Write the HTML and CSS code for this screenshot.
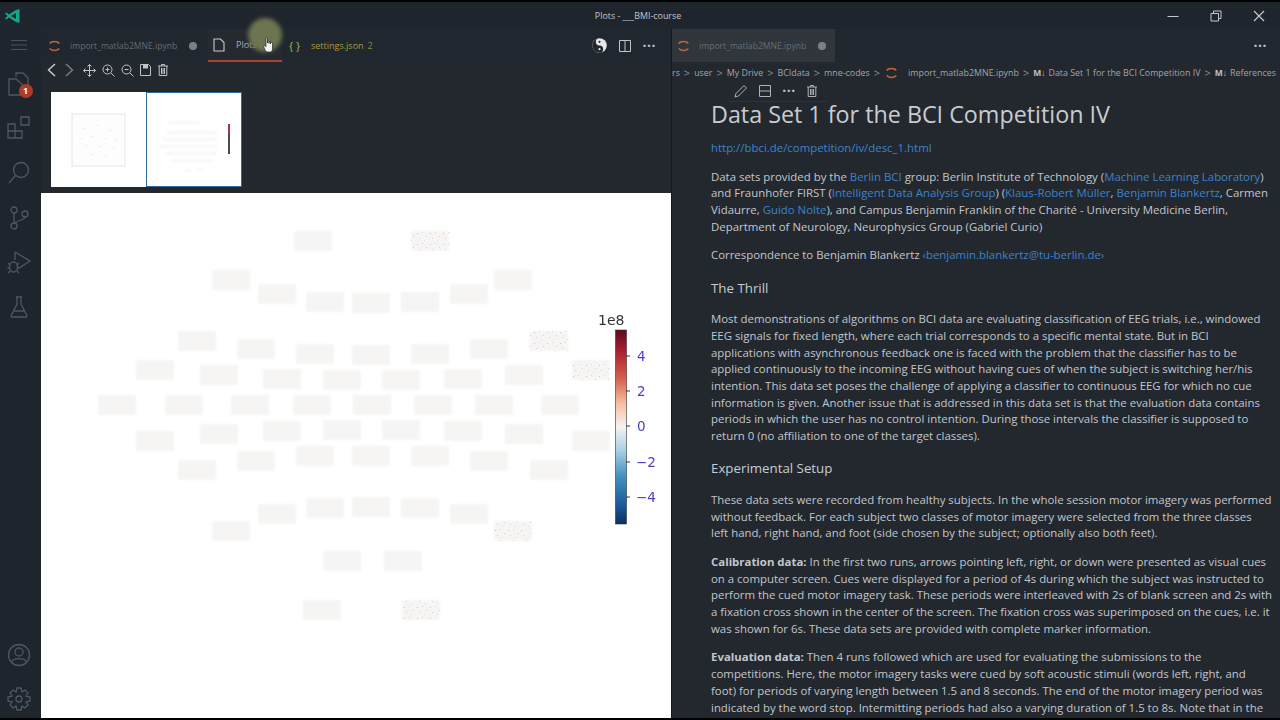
FILE: index.html
```html
<!DOCTYPE html>
<html lang="en">
<head>
    <meta charset="UTF-8">
    <title>Plots - ___BMI-course</title>
    <link rel="stylesheet" href="styles.css">
</head>
<body>
<div class="window">
    <header class="titlebar">
        <svg class="logo" width="16" height="14" viewBox="0 0 16 14"><path d="M11 1 L14.5 0 V14 L11 13 Z" fill="#17a58c"/><path d="M11 1 V4 L6 7 L11 10 V13 L4 8.5 L1.5 10.5 L0 9.5 L2.5 7 L0 4.5 L1.5 3.5 L4 5.5 Z" fill="#17a58c"/></svg>
        <div class="window-title">Plots - ___BMI-course</div>
        <div class="window-controls">
            <svg width="12" height="12" viewBox="0 0 12 12"><path d="M0.5 6.5 H11.5" stroke="#c4c8cc" fill="none"/></svg>
            <svg width="12" height="12" viewBox="0 0 12 12"><path d="M1 3.5 H8.5 V11 H1 Z M3.5 3.5 V1 H11 V8.5 H8.5" stroke="#c4c8cc" fill="none"/></svg>
            <svg width="12" height="12" viewBox="0 0 12 12"><path d="M1 1 L11 11 M11 1 L1 11" stroke="#c4c8cc" stroke-width="1.2" fill="none"/></svg>
        </div>
    </header>
    <div class="workbench">
        <nav class="activity">
            <div class="activity-top">
                <svg class="menu-icon" width="16" height="12" viewBox="0 0 16 12"><path d="M0 1.5 H16 M0 6 H16 M0 10.5 H16" stroke="#4b535b" stroke-width="1.1" fill="none"/></svg>
                <div class="files-icon">
                    <svg width="22" height="24" viewBox="0 0 22 24"><path d="M8 5 V1 H15 L20 6 V18 H14 M1 7 H8 L14 12 V23 H1 Z" stroke="#4f5760" stroke-width="1.3" fill="none"/></svg>
                    <span class="badge">1</span>
                </div>
                <svg width="24" height="24" viewBox="0 0 24 24"><path d="M1 8 H8 V15 H15 V22 H1 Z M1 15 H8 V22 M14 1 H22 V9 H14 Z" stroke="#4f5760" stroke-width="1.3" fill="none"/></svg>
                <svg width="22" height="24" viewBox="0 0 22 24"><circle cx="13" cy="9" r="7.5" stroke="#4f5760" stroke-width="1.3" fill="none"/><path d="M7.5 14.5 L1 22" stroke="#4f5760" stroke-width="1.3" fill="none"/></svg>
                <svg width="20" height="24" viewBox="0 0 20 24"><circle cx="5" cy="4" r="3" stroke="#4f5760" stroke-width="1.3" fill="none"/><circle cx="5" cy="20" r="3" stroke="#4f5760" stroke-width="1.3" fill="none"/><circle cx="16" cy="8" r="3" stroke="#4f5760" stroke-width="1.3" fill="none"/><path d="M5 7 V17 M16 11 C16 14 9 14 6 17" stroke="#4f5760" stroke-width="1.3" fill="none"/></svg>
                <svg width="24" height="24" viewBox="0 0 24 24"><path d="M8 1 L23 10 L12 17" stroke="#4f5760" stroke-width="1.3" fill="none"/><path d="M8 1 V9" stroke="#4f5760" stroke-width="1.3" fill="none"/><ellipse cx="6.5" cy="16" rx="4" ry="5" stroke="#4f5760" stroke-width="1.3" fill="none"/><path d="M1 12 L3 14 M12 12 L10 14 M0.5 17 H3 M10 17 H12.5 M1 22 L3 20 M12 22 L10 20" stroke="#4f5760" stroke-width="1.3" fill="none"/></svg>
                <svg width="18" height="22" viewBox="0 0 18 22"><path d="M6 1 H12 M7 1 V8 L1 20 C1 21 1.5 21 2 21 H16 C16.5 21 17 21 17 20 L11 8 V1 M4 15 H14" stroke="#4f5760" stroke-width="1.3" fill="none"/></svg>
            </div>
            <div class="activity-bottom">
                <svg width="24" height="24" viewBox="0 0 24 24"><circle cx="12" cy="12" r="10.5" stroke="#4f5760" stroke-width="1.3" fill="none"/><circle cx="12" cy="9" r="4" stroke="#4f5760" stroke-width="1.3" fill="none"/><path d="M4.5 19 C6 14.5 18 14.5 19.5 19" stroke="#4f5760" stroke-width="1.3" fill="none"/></svg>
                <svg width="24" height="24" viewBox="0 0 24 24"><circle cx="12" cy="12" r="3" stroke="#4f5760" stroke-width="1.3" fill="none"/><path d="M10 1 H14 L15 5 L18 3 L21 6 L19 9 L23 10 V14 L19 15 L21 18 L18 21 L15 19 L14 23 H10 L9 19 L6 21 L3 18 L5 15 L1 14 V10 L5 9 L3 6 L6 3 L9 5 Z" stroke="#4f5760" stroke-width="1.3" fill="none"/></svg>
            </div>
        </nav>
        <section class="left-pane">
            <div class="tabs">
                <div class="tab tab-notebook">
                    <svg class="jupyter" width="11" height="14" viewBox="0 0 14 16"><path d="M1 5 C3 1.5 11 1.5 13 5 M1 11 C3 14.5 11 14.5 13 11" stroke="#b8683a" stroke-width="1.8" fill="none"/></svg>
                    <span class="tab-name">import_matlab2MNE.ipynb</span>
                    <span class="dirty-dot"></span>
                </div>
                <div class="tab tab-plots">
                    <svg width="12" height="14" viewBox="0 0 12 14"><path d="M1 1 H7.5 L11 4.5 V13 H1 Z" stroke="#c5c9cd" stroke-width="1.1" fill="none"/></svg>
                    <span class="tab-name-active">Plots</span>
                </div>
                <div class="tab tab-settings">
                    <span class="braces">{ }</span>
                    <span class="settings-name">settings.json</span>
                    <span class="settings-count">2</span>
                </div>
                <div class="tab-actions">
                    <svg width="15" height="15" viewBox="0 0 14 14"><circle cx="7" cy="7" r="6.8" fill="#e4e6e8"/><path d="M7 .2 A6.8 6.8 0 0 0 7 13.8 A3.4 3.4 0 0 0 7 7 A3.4 3.4 0 0 1 7 .2" fill="#23282f"/><circle cx="7" cy="3.6" r="1" fill="#23282f"/><circle cx="7" cy="10.4" r="1" fill="#e4e6e8"/></svg>
                    <svg width="12" height="12" viewBox="0 0 12 12"><path d="M.5 .5 H11.5 V11.5 H.5 Z M6 .5 V11.5" stroke="#c0c4c8" fill="none"/></svg>
                    <span class="more">···</span>
                </div>
            </div>
            <div class="plot-toolbar">
                <svg width="9" height="14" viewBox="0 0 9 14"><path d="M8 1 L1.5 7 L8 13" stroke="#c9cdd1" stroke-width="1.4" fill="none"/></svg>
                <svg class="dim" width="9" height="14" viewBox="0 0 9 14"><path d="M1 1 L7.5 7 L1 13" stroke="#7a8087" stroke-width="1.4" fill="none"/></svg>
                <svg width="13" height="13" viewBox="0 0 13 13"><path d="M6.5 .5 V12.5 M.5 6.5 H12.5 M4.5 2.5 L6.5 .5 L8.5 2.5 M4.5 10.5 L6.5 12.5 L8.5 10.5 M2.5 4.5 L.5 6.5 L2.5 8.5 M10.5 4.5 L12.5 6.5 L10.5 8.5" stroke="#c0c4c8" fill="none"/></svg>
                <svg width="13" height="13" viewBox="0 0 13 13"><circle cx="5.5" cy="5.5" r="4.5" stroke="#c0c4c8" fill="none"/><path d="M3.5 5.5 H7.5 M5.5 3.5 V7.5 M9 9 L12.5 12.5" stroke="#c0c4c8" fill="none"/></svg>
                <svg width="13" height="13" viewBox="0 0 13 13"><circle cx="5.5" cy="5.5" r="4.5" stroke="#c0c4c8" fill="none"/><path d="M3.5 5.5 H7.5 M9 9 L12.5 12.5" stroke="#c0c4c8" fill="none"/></svg>
                <svg width="11" height="12" viewBox="0 0 11 12"><path d="M.5 .5 H8.5 L10.5 2.5 V11.5 H.5 Z" stroke="#c0c4c8" fill="none"/><path d="M3 1 H8 V4.5 H3 Z" fill="#c0c4c8"/></svg>
                <svg width="10" height="12" viewBox="0 0 10 12"><path d="M0 2 H10 M3.5 2 V.5 H6.5 V2 M1.2 2 V11.5 H8.8 V2 M3.5 4 V10 M5 4 V10 M6.5 4 V10" stroke="#c0c4c8" fill="none"/></svg>
            </div>
            <div class="thumbs">
                <div class="thumb">
                    <svg width="94" height="94" viewBox="0 0 94 94"><rect x="21" y="22" width="53" height="52" fill="#fdfdfd" stroke="#e6e6e6"/><g fill="#efefef"><rect x="32" y="36" width="3" height="1"/><rect x="44" y="33" width="3" height="1"/><rect x="58" y="38" width="3" height="1"/><rect x="28" y="46" width="3" height="1"/><rect x="40" y="44" width="3" height="1"/><rect x="52" y="46" width="3" height="1"/><rect x="64" y="47" width="3" height="1"/><rect x="34" y="53" width="3" height="1"/><rect x="47" y="54" width="3" height="1"/><rect x="60" y="55" width="3" height="1"/><rect x="40" y="62" width="3" height="1"/><rect x="52" y="63" width="3" height="1"/></g></svg>
                </div>
                <div class="thumb thumb-active">
                    <svg width="94" height="94" viewBox="0 0 94 94"><g class="thumb-patches" fill="#f7f7f7"><rect x="22" y="28" width="30" height="3"/><rect x="20" y="38" width="50" height="3"/><rect x="15" y="45" width="55" height="3"/><rect x="12" y="52" width="58" height="3"/><rect x="18" y="59" width="52" height="3"/><rect x="24" y="66" width="42" height="3"/><rect x="38" y="76" width="6" height="3"/><rect x="50" y="76" width="6" height="3"/></g><rect x="81" y="31" width="2" height="30" fill="#4a4a50"/><rect x="81" y="31" width="2" height="10" fill="#a03848"/></svg>
                </div>
            </div>
            <div class="plot">
                <svg class="figure" width="630" height="525" viewBox="41 193 630 525">
                    <defs>
                        <filter id="soft"><feGaussianBlur stdDeviation="1.1"/></filter>
                        <pattern id="noise" width="13" height="11" patternUnits="userSpaceOnUse">
                            <rect x="1" y="2" width="1" height="1" fill="#c9605c"/>
                            <rect x="6" y="1" width="1" height="1" fill="#d89a90"/>
                            <rect x="10" y="5" width="1" height="1" fill="#8aa0c4"/>
                            <rect x="3" y="7" width="1" height="1" fill="#d88a80"/>
                            <rect x="8" y="9" width="1" height="1" fill="#b9c4d4"/>
                        </pattern>
                        <linearGradient id="rdbu" x1="0" y1="0" x2="0" y2="1">
                            <stop offset="0" stop-color="#5f0a20"/>
                            <stop offset="0.1" stop-color="#a51c2e"/>
                            <stop offset="0.25" stop-color="#d6604d"/>
                            <stop offset="0.38" stop-color="#f6bfa3"/>
                            <stop offset="0.5" stop-color="#f5f3f1"/>
                            <stop offset="0.62" stop-color="#a9d0e4"/>
                            <stop offset="0.75" stop-color="#4393c3"/>
                            <stop offset="0.9" stop-color="#1c5a9c"/>
                            <stop offset="1" stop-color="#0a2f5e"/>
                        </linearGradient>
                        <rect id="p" width="38" height="20" x="-19" y="-10"/>
                    </defs>
                    <g class="patches" filter="url(#soft)">
                        <use href="#p" x="313" y="241"/><use href="#p" x="430" y="241"/>
                        <use href="#p" x="231" y="280"/><use href="#p" x="513" y="280"/>
                        <use href="#p" x="277" y="294"/><use href="#p" x="469" y="294"/>
                        <use href="#p" x="325" y="302"/><use href="#p" x="371" y="303"/><use href="#p" x="420" y="302"/>
                        <use href="#p" x="197" y="341"/><use href="#p" x="549" y="341"/>
                        <use href="#p" x="256" y="349"/><use href="#p" x="489" y="349"/>
                        <use href="#p" x="315" y="354"/><use href="#p" x="371" y="355"/><use href="#p" x="430" y="354"/>
                        <use href="#p" x="155" y="370"/><use href="#p" x="591" y="370"/>
                        <use href="#p" x="219" y="375"/><use href="#p" x="524" y="375"/>
                        <use href="#p" x="282" y="379"/><use href="#p" x="342" y="380"/><use href="#p" x="401" y="380"/><use href="#p" x="463" y="379"/>
                        <use href="#p" x="117" y="405"/><use href="#p" x="184" y="405"/><use href="#p" x="250" y="405"/><use href="#p" x="312" y="405"/><use href="#p" x="372" y="405"/><use href="#p" x="433" y="405"/><use href="#p" x="494" y="405"/><use href="#p" x="560" y="405"/>
                        <use href="#p" x="219" y="434"/><use href="#p" x="282" y="431"/><use href="#p" x="342" y="430"/><use href="#p" x="401" y="430"/><use href="#p" x="463" y="431"/><use href="#p" x="524" y="434"/>
                        <use href="#p" x="155" y="441"/><use href="#p" x="591" y="441"/>
                        <use href="#p" x="315" y="456"/><use href="#p" x="371" y="456"/><use href="#p" x="430" y="456"/>
                        <use href="#p" x="256" y="461"/><use href="#p" x="489" y="461"/>
                        <use href="#p" x="197" y="470"/><use href="#p" x="549" y="470"/>
                        <use href="#p" x="325" y="508"/><use href="#p" x="371" y="507"/><use href="#p" x="420" y="508"/>
                        <use href="#p" x="277" y="514"/><use href="#p" x="469" y="514"/>
                        <use href="#p" x="231" y="531"/><use href="#p" x="513" y="531"/>
                        <use href="#p" x="342" y="561"/><use href="#p" x="403" y="561"/>
                        <use href="#p" x="322" y="610"/><use href="#p" x="421" y="610"/>
                    </g>
                    <g class="noisy">
                        <rect x="530" y="331" width="38" height="20"/>
                        <rect x="572" y="360" width="38" height="20"/>
                        <rect x="494" y="521" width="38" height="20"/>
                        <rect x="402" y="600" width="38" height="20"/>
                        <rect x="411" y="231" width="38" height="20"/>
                    </g>
                    <rect x="615.5" y="330" width="11" height="194" fill="url(#rdbu)" stroke="#333" stroke-width="0.6"/>
                    <path d="M626 356 H630 M626 391 H630 M626 426 H630 M626 462 H630 M626 497 H630" stroke="#333"/>
                    <text class="cb-exp" x="598" y="325">1e8</text>
                    <g class="cb-ticks">
                        <text x="637" y="361">4</text>
                        <text x="637" y="396">2</text>
                        <text x="637" y="431">0</text>
                        <text x="636" y="467">−2</text>
                        <text x="636" y="502">−4</text>
                    </g>
                </svg>
            </div>
        </section>
        <section class="right-pane">
            <div class="tabs tabs-right">
                <div class="tab tab-notebook tab-right">
                    <svg class="jupyter" width="11" height="14" viewBox="0 0 14 16"><path d="M1 5 C3 1.5 11 1.5 13 5 M1 11 C3 14.5 11 14.5 13 11" stroke="#b8683a" stroke-width="1.8" fill="none"/></svg>
                    <span class="tab-name">import_matlab2MNE.ipynb</span>
                    <span class="dirty-dot"></span>
                </div>
                <span class="more more-right">···</span>
            </div>
            <div class="breadcrumbs">
                <span class="crumb-clip">rs</span><i>&gt;</i><span>user</span><i>&gt;</i><span>My Drive</span><i>&gt;</i><span>BCIdata</span><i>&gt;</i><span>mne-codes</span><i>&gt;</i>
                <svg class="crumb-jupyter" width="11" height="14" viewBox="0 0 14 16"><path d="M1 5 C3 1.5 11 1.5 13 5 M1 11 C3 14.5 11 14.5 13 11" stroke="#b8683a" stroke-width="1.8" fill="none"/></svg>
                <span>import_matlab2MNE.ipynb</span><i>&gt;</i><b>M↓</b><span>Data Set 1 for the BCI Competition IV</span><i>&gt;</i><b>M↓</b><span>References</span>
            </div>
            <div class="cell-toolbar">
                <svg width="14" height="14" viewBox="0 0 14 14"><path d="M1 13 L2 9.5 L10 1.5 L12.5 4 L4.5 12 Z" stroke="#aeb2b6" fill="none"/></svg>
                <svg width="12" height="12" viewBox="0 0 12 12"><path d="M.5 .5 H11.5 V11.5 H.5 Z M.5 6 H11.5" stroke="#aeb2b6" fill="none"/></svg>
                <span class="more">···</span>
                <svg width="10" height="12" viewBox="0 0 10 12"><path d="M0 2 H10 M3.5 2 V.5 H6.5 V2 M1.2 2 V11.5 H8.8 V2 M3.5 4 V10 M5 4 V10 M6.5 4 V10" stroke="#aeb2b6" fill="none"/></svg>
            </div>
            <article class="markdown">
                <h1>Data Set 1 for the BCI Competition IV</h1>
                <p><a>http://bbci.de/competition/iv/desc_1.html</a></p>
                <p>Data sets provided by the <a>Berlin BCI</a> group: Berlin Institute of Technology (<a>Machine Learning Laboratory</a>)<br>
                and Fraunhofer FIRST (<a>Intelligent Data Analysis Group</a>) (<a>Klaus-Robert Müller</a>, <a>Benjamin Blankertz</a>, Carmen<br>
                Vidaurre, <a>Guido Nolte</a>), and Campus Benjamin Franklin of the Charité - University Medicine Berlin,<br>
                Department of Neurology, Neurophysics Group (Gabriel Curio)</p>
                <p class="contact">Correspondence to Benjamin Blankertz <a>‹benjamin.blankertz@tu-berlin.de›</a></p>
                <h2 class="thrill">The Thrill</h2>
                <p>Most demonstrations of algorithms on BCI data are evaluating classification of EEG trials, i.e., windowed<br>
                EEG signals for fixed length, where each trial corresponds to a specific mental state. But in BCI<br>
                applications with asynchronous feedback one is faced with the problem that the classifier has to be<br>
                applied continuously to the incoming EEG without having cues of when the subject is switching her/his<br>
                intention. This data set poses the challenge of applying a classifier to continuous EEG for which no cue<br>
                information is given. Another issue that is addressed in this data set is that the evaluation data contains<br>
                periods in which the user has no control intention. During those intervals the classifier is supposed to<br>
                return 0 (no affiliation to one of the target classes).</p>
                <h2>Experimental Setup</h2>
                <p>These data sets were recorded from healthy subjects. In the whole session motor imagery was performed<br>
                without feedback. For each subject two classes of motor imagery were selected from the three classes<br>
                left hand, right hand, and foot (side chosen by the subject; optionally also both feet).</p>
                <p><strong>Calibration data:</strong> In the first two runs, arrows pointing left, right, or down were presented as visual cues<br>
                on a computer screen. Cues were displayed for a period of 4s during which the subject was instructed to<br>
                perform the cued motor imagery task. These periods were interleaved with 2s of blank screen and 2s with<br>
                a fixation cross shown in the center of the screen. The fixation cross was superimposed on the cues, i.e. it<br>
                was shown for 6s. These data sets are provided with complete marker information.</p>
                <p><strong>Evaluation data:</strong> Then 4 runs followed which are used for evaluating the submissions to the<br>
                competitions. Here, the motor imagery tasks were cued by soft acoustic stimuli (words left, right, and<br>
                foot) for periods of varying length between 1.5 and 8 seconds. The end of the motor imagery period was<br>
                indicated by the word stop. Intermitting periods had also a varying duration of 1.5 to 8s. Note that in the</p>
            </article>
        </section>
    </div>
    <div class="cursor-glow"></div>
    <svg class="cursor-hand" width="11" height="16" viewBox="0 0 11 16"><path d="M3 8 V1.5 C3 .5 4.5 .5 4.5 1.5 V6 V4.5 C4.5 3.6 6 3.6 6 4.5 V6.5 V5 C6 4.2 7.5 4.2 7.5 5 V7 V6 C7.5 5.2 9.5 5.2 9.5 6.2 V11 C9.5 13 9 15 7.5 15 H4 C2.5 15 1 11 .8 9.5 C.6 8.2 2 8 3 9.5 Z" fill="#f4f4f4" stroke="#222" stroke-width="0.7"/></svg>
</div>
</body>
</html>
```

FILE: styles.css
```css
* { box-sizing: border-box; }
html, body { margin: 0; height: 100%; background: #000; overflow: hidden; }
body { font-family: "Open Sans", "Noto Sans", sans-serif; color: #c6cace; }
svg { display: block; flex: none; }

.window { position: relative; width: 1280px; height: 720px; padding-top: 2px; display: flex; flex-direction: column; }

.titlebar { height: 27px; flex: none; background: #1f252c; display: flex; align-items: center; position: relative; padding: 0 15px 0 5px; }
.window-title { position: absolute; left: 0; right: 4px; text-align: center; font-size: 8.9px; color: #c2c6ca; }
.window-controls { margin-left: auto; display: flex; gap: 31px; align-items: center; }

.workbench { flex: 1; display: flex; min-height: 0; padding-bottom: 2px; }

.activity { width: 41px; flex: none; background: #1f252c; display: flex; flex-direction: column; justify-content: space-between; align-items: center; padding: 10px 4px 7px 0; }
.activity-top { display: flex; flex-direction: column; align-items: center; gap: 21px; }
.activity-bottom { display: flex; flex-direction: column; align-items: center; gap: 20px; }
.files-icon { position: relative; margin-bottom: -1px; }
.badge { position: absolute; right: -3px; bottom: -2px; width: 14px; height: 14px; border-radius: 50%; background: #b03a2a; color: #fff; font-size: 9px; font-weight: 700; line-height: 14px; text-align: center; }

.left-pane { width: 630px; flex: none; display: flex; flex-direction: column; background: #23282f; }
.right-pane { flex: 1; position: relative; background: #23282f; border-left: 1px solid #15181c; min-width: 0; }

.tabs { height: 33px; display: flex; align-items: stretch; background: #21272e; font-size: 9px; }
.tab { display: flex; align-items: center; flex: none; }
.tab-notebook { width: 167px; padding-left: 8px; }
.tab-notebook .tab-name { margin-left: 10px; width: 114px; font-size: 8.6px; white-space: nowrap; color: #666c72; }
.dirty-dot { width: 8px; height: 8px; border-radius: 50%; background: #7b8085; margin-left: 5px; }
.tab-plots { width: 74px; padding-left: 5px; background: #252a31; border-bottom: 2px solid #a8452f; gap: 11px; }
.tab-name-active { color: #a6aaae; }
.tab-settings { padding-left: 7px; }
.braces { color: #a4b84a; font-size: 11px; width: 22px; }
.settings-name { color: #a79a3a; margin-right: 4px; }
.settings-count { color: #8d8838; }
.tab-actions { margin-left: auto; display: flex; align-items: center; gap: 12px; padding-right: 15px; }
.more { color: #bcc0c4; font-size: 14px; font-weight: 700; letter-spacing: .5px; line-height: 12px; }

.plot-toolbar { height: 21px; flex: none; display: flex; align-items: center; gap: 6px; padding: 0 0 5px 6px; }
.plot-toolbar svg:nth-child(2) { margin-left: 3px; }
.plot-toolbar svg:nth-child(3) { margin-left: 3px; }
.plot-toolbar svg:nth-child(7) { margin-left: 1px; }

.thumbs { display: flex; padding: 9px 0 0 10px; height: 110px; flex: none; }
.thumb { width: 95px; height: 95px; background: #fff; }
.thumb-active { width: 96px; border: 1px solid #2c6a9c; }
.thumb-patches { filter: blur(1px); }

.plot { flex: 1; background: #fff; min-height: 0; }
.patches { fill: #f6f5f4; }
.noisy { fill: url(#noise); opacity: .4; }
.cb-exp { font: 14px "DejaVu Sans", sans-serif; fill: #333; }
.cb-ticks text { font: 13.5px "DejaVu Sans", sans-serif; fill: #4b3fc4; }

.tabs-right { justify-content: space-between; }
.tab-right { width: 163px; background: #30363c; padding-left: 6px; }
.more-right { align-self: center; padding-right: 13px; }

.breadcrumbs { height: 21px; display: flex; align-items: center; white-space: nowrap; overflow: hidden; font-size: 8.9px; color: #a0a5aa; }
.breadcrumbs i { font-style: normal; font-size: 11px; margin: 0 4px; color: #8b9095; }
.breadcrumbs b { font-size: 8.5px; margin-right: 3px; color: #bcc0c4; }
.crumb-jupyter { margin: 0 11px 0 2px; }

.cell-toolbar { position: absolute; left: 55px; top: 51px; width: 100px; height: 22px; display: flex; align-items: center; justify-content: space-between; padding: 0 10px 0 7px; border-bottom: 1px solid #2d3238; }

.markdown { padding: 18px 0 0 39px; white-space: nowrap; font-size: 11.42px; line-height: 16.7px; color: #c2c6ca; }
.markdown h1 { font-size: 23.3px; font-weight: 400; line-height: 26px; margin: 0 0 13px; color: #c8ccd0; }
.markdown h2 { font-size: 13.3px; font-weight: 400; line-height: 18px; margin: 14px 0 15px; color: #c8ccd0; }
.markdown p { margin: 0 0 12px; }
.markdown p.contact { margin: -1px 0 16px; }
.markdown h2.thrill { margin-bottom: 14px; }
.markdown a { color: #3b83c9; }
.markdown strong { font-weight: 700; }

.cursor-glow { position: absolute; left: 248px; top: 18px; width: 34px; height: 34px; border-radius: 50%; background: #6d7550; filter: blur(2px); }
.cursor-hand { position: absolute; left: 263px; top: 37px; }
```
